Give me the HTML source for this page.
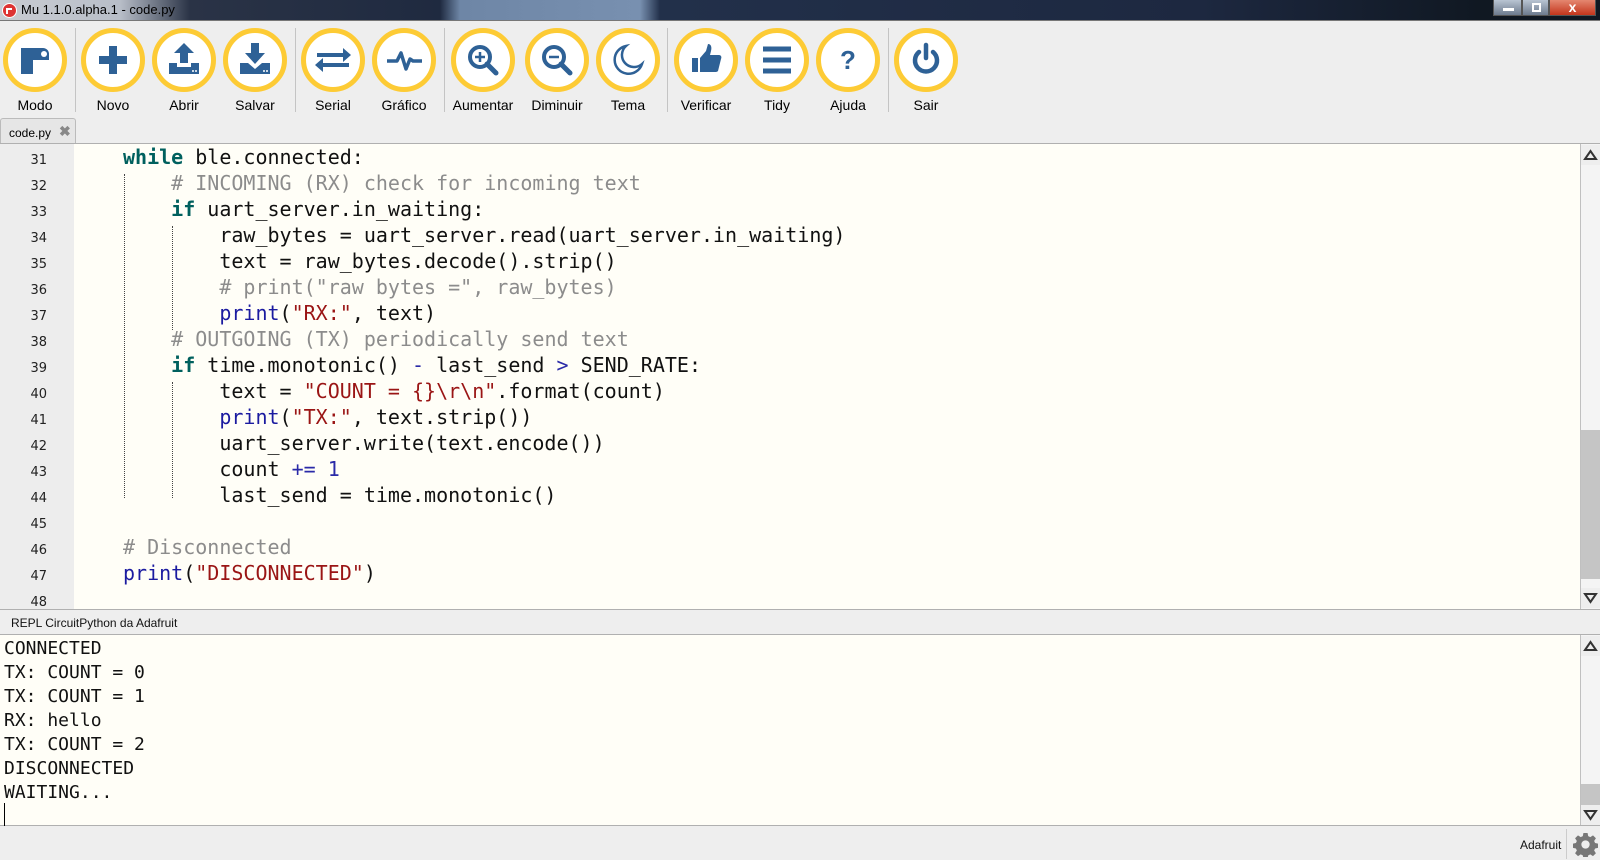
<!DOCTYPE html>
<html><head><meta charset="utf-8"><style>
*{margin:0;padding:0;box-sizing:border-box}
body{width:1600px;height:860px;overflow:hidden;background:#eeeeee;font-family:"Liberation Sans",sans-serif;position:relative}
.abs{position:absolute}
#title{left:0;top:0;width:1600px;height:21px;background:linear-gradient(90deg,#c9ccd2 0,#b8bec8 120px,#2a3346 190px,#1f2a40 440px,#6e86a6 460px,#7890b0 640px,#22304a 660px,#1d2840 1200px,#101822 1480px);border-bottom:1px solid #777}
#title span{position:absolute;left:21px;top:2px;font-size:13px;color:#000}
.btn{position:absolute;top:0;height:16px;border:1px solid #555;border-top:none}
.tb{position:absolute;top:28px;width:64px;height:64px;border:5px solid #fdcb35;border-radius:50%;background:#fff}
.tb svg{position:absolute;left:0;top:0;width:54px;height:54px}
.lbl{position:absolute;top:97px;font-size:14px;color:#000;width:90px;text-align:center}
.sep{position:absolute;top:28px;width:1px;height:84px;background:#c4c4c4}
#tab{left:0;top:118px;width:76px;height:26px;border:1px solid #bbb;border-bottom:none;background:#e6e6e6;border-radius:3px 3px 0 0;font-size:12px;padding:7px 0 0 8px}
#editor{left:0;top:143px;width:1600px;height:467px;background:#fffef7;border-top:1px solid #b0b0b0;border-bottom:1px solid #b0b0b0;overflow:hidden}
#gutter{left:0;top:0;width:74px;height:466px;background:#ededed}
.ln{position:absolute;left:0;width:47px;text-align:right;font-size:13px;font-family:"DejaVu Sans",sans-serif;color:#222}
.code{position:absolute;left:123px;font-family:"DejaVu Sans Mono",monospace;font-size:20px;white-space:pre;color:#111;line-height:26px}
.k{color:#00605e;font-weight:bold}.c{color:#8c8c8c}.p{color:#1b1ba0}.s{color:#9a1515}.o{color:#2a2aa8}
.guide{position:absolute;width:0;border-left:1px dotted #444}
.sb{position:absolute;left:1580px;width:20px;border-left:1px solid #c0c0c0;background:#f4f4f4}
.thumb{position:absolute;left:1581px;width:19px;background:#c5c5c5}
.arr{position:absolute;left:1581px;width:19px;height:20px;background:#eee}
#replbar{left:0;top:610px;width:1600px;height:24px;font-size:12px;padding:6px 0 0 11px;color:#111}
#repl{left:0;top:634px;width:1600px;height:192px;background:#fffef7;border-top:1px solid #b0b0b0;border-bottom:1px solid #b0b0b0}
.rt{position:absolute;left:4px;top:2px;font-family:"DejaVu Sans Mono",monospace;font-size:18px;line-height:24px;white-space:pre;color:#111}
</style></head><body>
<div id="title" class="abs"><svg class="abs" style="left:2px;top:3px" width="15" height="15"><circle cx="7.5" cy="7.5" r="7" fill="#d33" stroke="#fff" stroke-width="1"/><path d="M4 11V5h6v2H6v4z" fill="#fff"/></svg><span>Mu 1.1.0.alpha.1 - code.py</span>
<div class="btn" style="left:1493px;width:29px;background:linear-gradient(#b9c4d2,#6d7b8e)"><div class="abs" style="left:9px;top:8px;width:11px;height:3px;background:#fff"></div></div>
<div class="btn" style="left:1522px;width:27px;background:linear-gradient(#b9c4d2,#6d7b8e)"><div class="abs" style="left:9px;top:3px;width:9px;height:9px;border:2px solid #fff"></div></div>
<div class="btn" style="left:1549px;width:47px;background:linear-gradient(#e48770,#c3351c);color:#fff;font-weight:bold;font-size:14px;text-align:center;line-height:15px">x</div>
</div>

<div class="tb" style="left:3px"><svg viewBox="0 0 54 54"><path d="M13 15h22a6 6 0 0 1 6 6v6H25v14h-12z" fill="#2e6196"/><circle cx="36" cy="21" r="3" fill="#fff"/></svg></div>
<div class="lbl" style="left:-10px">Modo</div>
<div class="sep" style="left:75px"></div>
<div class="tb" style="left:81px"><svg viewBox="0 0 54 54"><path d="M23 13h8v10h10v8H31v10h-8V31H13v-8h10z" fill="#2e6196"/></svg></div>
<div class="lbl" style="left:68px">Novo</div>
<div class="tb" style="left:152px"><svg viewBox="0 0 54 54"><path d="M27 10l10 10h-6v10h-8V20h-6z M12 30h8v4h14v-4h8v11H12z" fill="#2e6196"/><circle cx="36" cy="38" r="1" fill="#fff"/><circle cx="39" cy="38" r="1" fill="#fff"/></svg></div>
<div class="lbl" style="left:139px">Abrir</div>
<div class="tb" style="left:223px"><svg viewBox="0 0 54 54"><path d="M23 10h8v10h6L27 31 17 20h6z M12 30h8l7 6 7-6h8v11H12z" fill="#2e6196"/><circle cx="36" cy="38" r="1" fill="#fff"/><circle cx="39" cy="38" r="1" fill="#fff"/></svg></div>
<div class="lbl" style="left:210px">Salvar</div>
<div class="sep" style="left:295px"></div>
<div class="tb" style="left:301px"><svg viewBox="0 0 54 54"><path d="M11 20h26v-5l8 7-8 7v-5H11z M43 30H17v-5l-8 7 8 7v-5h26z" fill="#2e6196"/></svg></div>
<div class="lbl" style="left:288px">Serial</div>
<div class="tb" style="left:372px"><svg viewBox="0 0 54 54"><path d="M10 28h10l4-8 5 16 4-10 3 2h9" stroke="#2e6196" stroke-width="3.5" fill="none" stroke-linejoin="round"/></svg></div>
<div class="lbl" style="left:359px">Gráfico</div>
<div class="sep" style="left:444px"></div>
<div class="tb" style="left:451px"><svg viewBox="0 0 54 54"><circle cx="24" cy="24" r="10" stroke="#2e6196" stroke-width="4" fill="none"/><path d="M31 31l9 9" stroke="#2e6196" stroke-width="5" stroke-linecap="round"/><path d="M24 19v10M19 24h10" stroke="#2e6196" stroke-width="2.5"/></svg></div>
<div class="lbl" style="left:438px">Aumentar</div>
<div class="tb" style="left:525px"><svg viewBox="0 0 54 54"><circle cx="24" cy="24" r="10" stroke="#2e6196" stroke-width="4" fill="none"/><path d="M31 31l9 9" stroke="#2e6196" stroke-width="5" stroke-linecap="round"/><path d="M19 24h10" stroke="#2e6196" stroke-width="2.5"/></svg></div>
<div class="lbl" style="left:512px">Diminuir</div>
<div class="tb" style="left:596px"><svg viewBox="0 0 54 54"><path d="M25 13a14 14 0 1 0 16 18a12 12 0 0 1-16-18z" stroke="#2e6196" stroke-width="2.5" fill="none"/></svg></div>
<div class="lbl" style="left:583px">Tema</div>
<div class="sep" style="left:667px"></div>
<div class="tb" style="left:674px"><svg viewBox="0 0 54 54"><rect x="13" y="25" width="6" height="14" fill="#2e6196"/><path d="M21 25l6-7 2-7c3 0 4 3 3 7l-1 4h9c2 0 3 2 2 4l-3 12c-1 1-2 1-3 1H21z" fill="#2e6196"/></svg></div>
<div class="lbl" style="left:661px">Verificar</div>
<div class="tb" style="left:745px"><svg viewBox="0 0 54 54"><path d="M13 16h28M13 27h28M13 38h28" stroke="#2e6196" stroke-width="5"/></svg></div>
<div class="lbl" style="left:732px">Tidy</div>
<div class="tb" style="left:816px"><svg viewBox="0 0 54 54"><text x="27" y="36" text-anchor="middle" font-family="Liberation Sans" font-weight="bold" font-size="26" fill="#2e6196">?</text></svg></div>
<div class="lbl" style="left:803px">Ajuda</div>
<div class="sep" style="left:888px"></div>
<div class="tb" style="left:894px"><svg viewBox="0 0 54 54"><path d="M20 19a11 11 0 1 0 14 0" stroke="#2e6196" stroke-width="4.5" fill="none" stroke-linecap="round"/><path d="M27 12v13" stroke="#2e6196" stroke-width="4.5" stroke-linecap="round"/></svg></div>
<div class="lbl" style="left:881px">Sair</div>

<div id="tab" class="abs">code.py <span style="position:absolute;left:58px;top:4px;color:#888;font-weight:bold;font-size:14px">✖</span></div>

<div id="editor" class="abs">
<div id="gutter" class="abs"></div>
<div class="ln" style="top:9px">31</div><div class="ln" style="top:35px">32</div><div class="ln" style="top:61px">33</div><div class="ln" style="top:87px">34</div><div class="ln" style="top:113px">35</div><div class="ln" style="top:139px">36</div><div class="ln" style="top:165px">37</div><div class="ln" style="top:191px">38</div><div class="ln" style="top:217px">39</div><div class="ln" style="top:243px">40</div><div class="ln" style="top:269px">41</div><div class="ln" style="top:295px">42</div><div class="ln" style="top:321px">43</div><div class="ln" style="top:347px">44</div><div class="ln" style="top:373px">45</div><div class="ln" style="top:399px">46</div><div class="ln" style="top:425px">47</div><div class="ln" style="top:451px">48</div>
<div class="guide" style="left:124px;top:30px;height:324px"></div>
<div class="guide" style="left:172px;top:82px;height:104px"></div>
<div class="guide" style="left:172px;top:238px;height:116px"></div>
<div class="code" style="top:0px"><span class="k">while</span> ble.connected:
    <span class="c"># INCOMING (RX) check for incoming text</span>
    <span class="k">if</span> uart_server.in_waiting:
        raw_bytes = uart_server.read(uart_server.in_waiting)
        text = raw_bytes.decode().strip()
        <span class="c"># print("raw bytes =", raw_bytes)</span>
        <span class="p">print</span>(<span class="s">"RX:"</span>, text)
    <span class="c"># OUTGOING (TX) periodically send text</span>
    <span class="k">if</span> time.monotonic() <span class="o">-</span> last_send <span class="o">&gt;</span> SEND_RATE:
        text = <span class="s">"COUNT = {}\r\n"</span>.format(count)
        <span class="p">print</span>(<span class="s">"TX:"</span>, text.strip())
        uart_server.write(text.encode())
        count <span class="o">+=</span> <span class="o">1</span>
        last_send = time.monotonic()

<span class="c"># Disconnected</span>
<span class="p">print</span>(<span class="s">"DISCONNECTED"</span>)</div>
</div>
<div class="sb" style="top:144px;height:465px"></div>
<div class="arr" style="top:145px"><svg width="19" height="20"><path d="M4 14L9.5 6 15 14z" fill="none" stroke="#333" stroke-width="2"/></svg></div>
<div class="thumb" style="top:430px;height:149px"></div>
<div class="arr" style="top:588px"><svg width="19" height="20"><path d="M4 6L9.5 14 15 6z" fill="none" stroke="#333" stroke-width="2"/></svg></div>

<div id="replbar" class="abs">REPL CircuitPython da Adafruit</div>
<div id="repl" class="abs"><div class="rt">CONNECTED
TX: COUNT = 0
TX: COUNT = 1
RX: hello
TX: COUNT = 2
DISCONNECTED
WAITING...</div><div class="abs" style="left:4px;top:168px;width:1px;height:23px;background:#000"></div></div>
<div class="sb" style="top:635px;height:190px"></div>
<div class="arr" style="top:636px"><svg width="19" height="20"><path d="M4 14L9.5 6 15 14z" fill="none" stroke="#333" stroke-width="2"/></svg></div>
<div class="thumb" style="top:784px;height:21px"></div>
<div class="arr" style="top:805px"><svg width="19" height="20"><path d="M4 6L9.5 14 15 6z" fill="none" stroke="#333" stroke-width="2"/></svg></div>

<div class="abs" style="left:1520px;top:838px;font-size:12px;color:#111">Adafruit</div>
<div class="abs" style="left:1566px;top:829px;width:1px;height:30px;background:#ccc"></div>
<svg class="abs" style="left:1573px;top:832px" width="25" height="25" viewBox="0 0 24 24"><path fill="#777" d="M10 1h4l.6 3 2 .9 2.6-1.7 2.8 2.8-1.7 2.6.9 2 3 .6v4l-3 .6-.9 2 1.7 2.6-2.8 2.8-2.6-1.7-2 .9-.6 3h-4l-.6-3-2-.9-2.6 1.7-2.8-2.8 1.7-2.6-.9-2-3-.6v-4l3-.6.9-2-1.7-2.6 2.8-2.8 2.6 1.7 2-.9z"/><circle cx="12" cy="12" r="4" fill="#eee"/></svg>
</body></html>
